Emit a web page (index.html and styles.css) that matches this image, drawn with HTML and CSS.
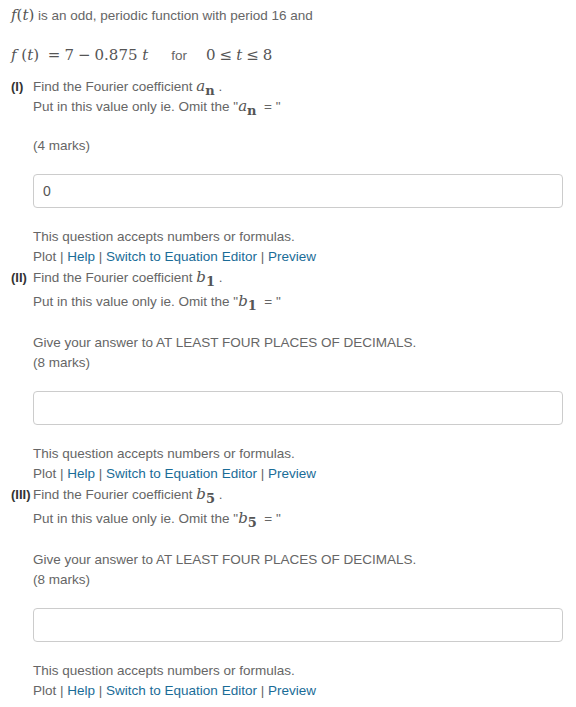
FILE: index.html
```html
<!DOCTYPE html>
<html lang="en">
<head>
    <meta charset="UTF-8">
    <title>Fourier coefficients</title>
    <link rel="stylesheet" href="styles.css">
</head>
<body>
    <div class="question">
        <p class="intro"><span class="math"><i>f</i>(<i>t</i>)</span> is an odd, periodic function with period 16 and</p>
        <p class="formula"><span class="math"><i>f</i> (<i>t</i>) <span class="op">=</span>7<span class="op">−</span>0.875 <i>t</i></span><span class="for">for</span><span class="math">0<span class="op">≤</span><i>t</i><span class="op">≤</span>8</span></p>

        <div class="part">
            <div class="label">(I)</div>
            <div class="body">
                <p class="line">Find the Fourier coefficient <span class="math"><i>a</i><sub>n</sub></span> .</p>
                <p class="line">Put in this value only ie. Omit the "<span class="math"><i>a</i><sub>n</sub></span> &nbsp;= "</p>
                <p class="marks">(4 marks)</p>
                <input class="answer" type="text" value="0">
                <p class="hint">This question accepts numbers or formulas.</p>
                <p class="tools">Plot | <a href="#">Help</a> | <a href="#">Switch to Equation Editor</a> | <a href="#">Preview</a></p>
            </div>
        </div>

        <div class="part">
            <div class="label">(II)</div>
            <div class="body">
                <p class="line">Find the Fourier coefficient <span class="math"><i>b</i><sub>1</sub></span> .</p>
                <p class="line sub">Put in this value only ie. Omit the "<span class="math"><i>b</i><sub>1</sub></span> &nbsp;= "</p>
                <p class="note">Give your answer to AT LEAST FOUR PLACES OF DECIMALS.</p>
                <p class="marks tight">(8 marks)</p>
                <input class="answer" type="text">
                <p class="hint">This question accepts numbers or formulas.</p>
                <p class="tools">Plot | <a href="#">Help</a> | <a href="#">Switch to Equation Editor</a> | <a href="#">Preview</a></p>
            </div>
        </div>

        <div class="part">
            <div class="label">(III)</div>
            <div class="body">
                <p class="line">Find the Fourier coefficient <span class="math"><i>b</i><sub>5</sub></span> .</p>
                <p class="line sub">Put in this value only ie. Omit the "<span class="math"><i>b</i><sub>5</sub></span> &nbsp;= "</p>
                <p class="note">Give your answer to AT LEAST FOUR PLACES OF DECIMALS.</p>
                <p class="marks tight">(8 marks)</p>
                <input class="answer" type="text">
                <p class="hint">This question accepts numbers or formulas.</p>
                <p class="tools">Plot | <a href="#">Help</a> | <a href="#">Switch to Equation Editor</a> | <a href="#">Preview</a></p>
            </div>
        </div>
    </div>
</body>
</html>
```
FILE: styles.css
```css
body {
    margin: 0;
    background-color: white;
    font-family: "Liberation Sans", Arial, sans-serif;
    font-size: 13.5px;
    line-height: 20px;
    color: #666;
}

p {
    margin: 0;
}

.question {
    padding: 6px 13px 0 11px;
}

.math {
    font-family: "DejaVu Serif", "Liberation Serif", serif;
    font-size: 15px;
    line-height: 1;
    color: #555;
}

.math sub {
    font-size: 13px;
    font-weight: bold;
    font-style: normal;
    vertical-align: -4px;
    line-height: 0;
}

.math .op {
    margin: 0 4px;
}

.line, .intro, .formula {
    height: 20px;
}

.formula {
    margin-top: 20px;
}

.formula .for {
    font-family: "Liberation Sans", Arial, sans-serif;
    font-size: 13.5px;
    margin: 0 19px 0 23px;
}

.part {
    display: flex;
}

.formula + .part {
    margin-top: 11px;
}

.part + .part {
    margin-top: 1px;
}

.label {
    width: 22px;
    flex-shrink: 0;
    color: #333;
    font-weight: bold;
    font-size: 13px;
}

.body {
    flex: 1;
}

.line.sub {
    margin-top: 4px;
}

.marks {
    margin-top: 19px;
}

.note {
    margin-top: 21px;
}

.marks.tight {
    margin-top: 0;
}

.answer {
    display: block;
    box-sizing: border-box;
    width: 100%;
    height: 34px;
    margin-top: 18px;
    padding: 0 9px;
    border: 1px solid #ccc;
    border-radius: 4px;
    font-family: "Liberation Sans", Arial, sans-serif;
    font-size: 14px;
    color: #555;
}

.hint {
    margin-top: 19px;
}

.tools a {
    color: #1a6c97;
    text-decoration: none;
}
```
